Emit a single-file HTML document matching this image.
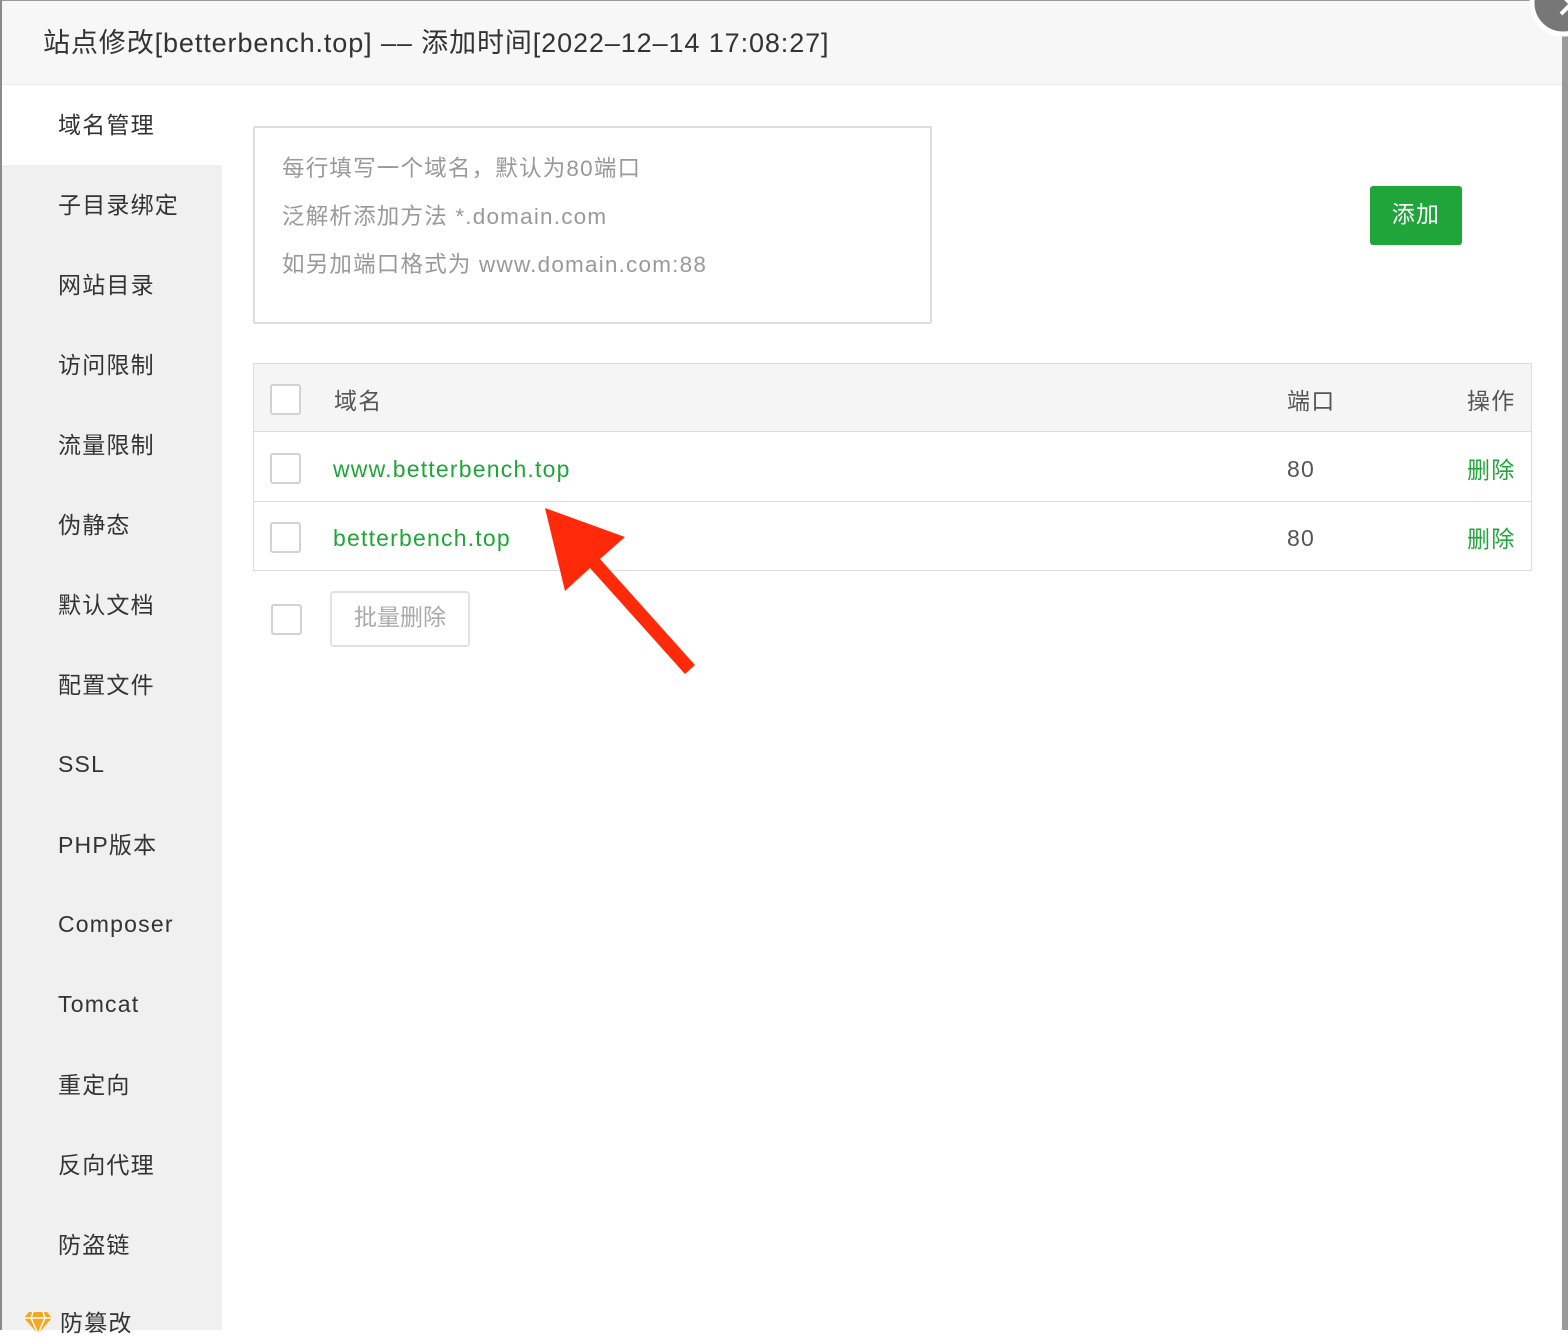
<!DOCTYPE html>
<html><head><meta charset="utf-8"><style>
*{margin:0;padding:0;box-sizing:border-box}
body{width:1568px;height:1330px;overflow:hidden;background:#fff;font-family:"Liberation Sans","Noto Sans CJK SC",sans-serif;position:relative;letter-spacing:1.2px}
.abs{position:absolute}
.hdr{left:2px;top:0;width:1560px;height:85px;background:#f7f7f7;border-bottom:1px solid #eaeaea;border-top:1px solid #999}
.title{left:43px;top:21px;font-size:27px;color:#333;white-space:nowrap;letter-spacing:0.9px}
.side{left:2px;top:85px;width:220px;height:1245px;background:#f0f0f0}
.item{position:absolute;left:58px;font-size:23px;color:#333;white-space:nowrap}
.c{margin-top:-4px}
.cb{position:absolute;width:31px;height:31px;border:2px solid #d2d2d2;border-radius:3px;background:#fff}
.g{color:#20a53a}
</style></head><body>
<div class="abs" style="left:0;top:0;width:2px;height:1330px;background:#8a8a8a"></div>
<div class="abs" style="left:1562px;top:0;width:6px;height:1330px;background:#9a9a9a"></div>
<div class="abs hdr"></div>
<div class="abs title">站点修改[betterbench.top] –– 添加时间[2022–12–14 17:08:27]</div>
<svg class="abs" style="left:1528px;top:-32px" width="70" height="70"><circle cx="35" cy="35" r="31" fill="#777" stroke="#fff" stroke-width="5"/><path d="M33 26l20 20M53 26L33 46" stroke="#fff" stroke-width="4"/></svg>
<div class="abs side"></div>
<div class="abs" style="left:2px;top:85px;width:220px;height:80px;background:#fff"></div>
<div class="item c" style="top:110px">域名管理</div>
<div class="item c" style="top:190px">子目录绑定</div>
<div class="item c" style="top:270px">网站目录</div>
<div class="item c" style="top:350px">访问限制</div>
<div class="item c" style="top:430px">流量限制</div>
<div class="item c" style="top:510px">伪静态</div>
<div class="item c" style="top:590px">默认文档</div>
<div class="item c" style="top:670px">配置文件</div>
<div class="item" style="top:751px">SSL</div>
<div class="item c" style="top:830px">PHP版本</div>
<div class="item" style="top:911px">Composer</div>
<div class="item" style="top:991px">Tomcat</div>
<div class="item c" style="top:1070px">重定向</div>
<div class="item c" style="top:1150px">反向代理</div>
<div class="item c" style="top:1230px">防盗链</div>
<div class="item c" style="top:1308px;left:60px">防篡改</div>
<svg class="abs" style="left:24px;top:1312px" width="28" height="22" viewBox="0 0 28 22"><path d="M5 0h18l5 6-14 16L0 6z" fill="#f5a623"/><path d="M0 6h28M9 0l-2 6 7 16 7-16-2-6" stroke="#fff" stroke-width="1.5" fill="none"/></svg>

<div class="abs" style="left:253px;top:126px;width:679px;height:198px;border:2px solid #ddd;border-radius:2px"></div>
<div class="abs" style="left:282px;top:145px;font-size:22.5px;color:#999;line-height:48px;white-space:nowrap">每行填写一个域名，默认为80端口<br>泛解析添加方法 *.domain.com<br>如另加端口格式为 www.domain.com:88</div>
<div class="abs" style="left:1370px;top:186px;width:92px;height:59px;background:#20a53a;border-radius:3px;color:#fff;font-size:23px;text-align:center;line-height:56px">添加</div>

<div class="abs" style="left:253px;top:363px;width:1279px;height:208px;border:1px solid #ddd"></div>
<div class="abs" style="left:254px;top:364px;width:1277px;height:68px;background:#f5f5f5;border-bottom:1px solid #ddd"></div>
<div class="abs" style="left:254px;top:501px;width:1277px;height:1px;background:#ddd"></div>
<div class="cb" style="left:270px;top:384px"></div>
<div class="cb" style="left:270px;top:453px"></div>
<div class="cb" style="left:270px;top:522px"></div>
<div class="cb" style="left:271px;top:604px"></div>
<div class="abs" style="left:334px;top:382px;font-size:23px;color:#555">域名</div>
<div class="abs" style="left:1287px;top:382px;font-size:23px;color:#555">端口</div>
<div class="abs" style="left:1467px;top:382px;font-size:23px;color:#555">操作</div>
<div class="abs g" style="left:333px;top:456px;font-size:23px">www.betterbench.top</div>
<div class="abs" style="left:1287px;top:456px;font-size:23px;color:#555">80</div>
<div class="abs g" style="left:1467px;top:451px;font-size:23px">删除</div>
<div class="abs g" style="left:333px;top:525px;font-size:23px">betterbench.top</div>
<div class="abs" style="left:1287px;top:525px;font-size:23px;color:#555">80</div>
<div class="abs g" style="left:1467px;top:520px;font-size:23px">删除</div>
<div class="abs" style="left:330px;top:591px;width:140px;height:56px;border:2px solid #e2e2e2;border-radius:4px;color:#aaa;font-size:23px;text-align:center;line-height:48px;letter-spacing:0">批量删除</div>

<svg class="abs" style="left:0;top:0" width="1568" height="1330"><polygon points="545,508 625,537 600,559 695,665 685,674 590,568 565,591" fill="#ff2a0a"/></svg>
</body></html>
